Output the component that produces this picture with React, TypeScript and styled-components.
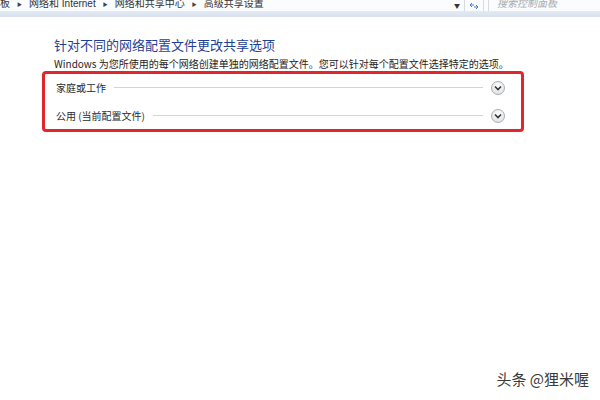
import React from 'react';
import styled, { createGlobalStyle } from 'styled-components';

const GlobalStyle = createGlobalStyle`
  html, body {
    margin: 0;
    padding: 0;
    background: #ffffff;
    font-family: "Noto Sans CJK SC", "Noto Sans", sans-serif;
  }
`;

const Page = styled.div`
  width: 600px;
  height: 400px;
  position: relative;
  overflow: hidden;
  background: #fff;
`;

const AddressBar = styled.div`
  height: 11px;
  display: flex;
  align-items: flex-end;
  background: #fbfcfd;
  overflow: hidden;
`;

const Crumbs = styled.div`
  flex: 1;
  display: flex;
  align-items: center;
  gap: 6px;
  font-family: "Liberation Sans", "Noto Sans CJK SC", sans-serif;
  font-size: 10px;
  line-height: 14px;
  color: #333;
`;

const Arrow = styled.span`
  font-size: 5px;
  color: #444;
  margin: 0 1px;
`;

const Tools = styled.div`
  display: flex;
  align-items: stretch;
  height: 11px;
`;

const ToolCell = styled.div<{ w: number }>`
  width: ${p => p.w}px;
  display: flex;
  align-items: center;
  justify-content: center;
  border-right: 1px solid #d6dbe2;
  font-size: 6px;
  color: #333;
`;

const Search = styled.div`
  width: 103px;
  margin-left: 4px;
  border-left: 1px solid #d6dbe2;
  padding-left: 8px;
  font-size: 10px;
  line-height: 14px;
  font-style: italic;
  color: #a7acb3;
  margin-top: -4px;
`;

const Band = styled.div`
  height: 6px;
  background: linear-gradient(#e3ebf4, #d6e0ec);
`;

const Content = styled.div`
  padding: 19px 0 0 42px;
`;

const Heading = styled.h1`
  margin: 0 0 0 12px;
  font-size: 13px;
  font-weight: normal;
  line-height: 17px;
  color: #1f3f93;
`;

const Description = styled.p`
  margin: 4px 0 0 12px;
  font-size: 10px;
  line-height: 14px;
  color: #1e1e1e;
`;

const Highlight = styled.div`
  box-sizing: border-box;
  width: 482px;
  height: 61px;
  border: 3px solid #e3262b;
  border-radius: 4px;
  display: flex;
  flex-direction: column;
  justify-content: center;
  gap: 13px;
  padding: 0 16px 0 11px;
`;

const Row = styled.div`
  display: flex;
  align-items: center;
  gap: 8px;
  height: 15px;
`;

const RowLabel = styled.span`
  font-size: 10px;
  color: #2b2b2b;
  white-space: nowrap;
`;

const Rule = styled.div`
  flex: 1;
  height: 1px;
  background: #d2d4d8;
`;

const Toggle = styled.div`
  width: 12px;
  height: 12px;
  border-radius: 50%;
  border: 1px solid #a9adb3;
  background: radial-gradient(circle at 50% 35%, #ffffff, #d8dadd);
  display: flex;
  align-items: center;
  justify-content: center;
`;

const Watermark = styled.div`
  position: absolute;
  right: 11px;
  bottom: 11px;
  font-size: 15px;
  color: #3a3a3a;
  text-shadow: 0 0 2px #fff, 0 0 2px #fff;
`;

const Chevron = () => (
  <svg width="8" height="6" viewBox="0 0 8 6">
    <path d="M1 1.5 L4 4.5 L7 1.5" fill="none" stroke="#333" strokeWidth="1.6" />
  </svg>
);

const sections = ['家庭或工作', '公用 (当前配置文件)'];

const App = () => {
  return (
    <Page>
      <GlobalStyle />
      <AddressBar>
        <Crumbs>
          <span>板</span>
          <Arrow>▶</Arrow>
          <span>网络和 Internet</span>
          <Arrow>▶</Arrow>
          <span>网络和共享中心</span>
          <Arrow>▶</Arrow>
          <span>高级共享设置</span>
        </Crumbs>
        <Tools>
          <ToolCell w={14}>▼</ToolCell>
          <ToolCell w={18}>
            <svg width="10" height="8" viewBox="0 0 10 8">
              <path d="M1 3 L5 3 M3 1 L1 3 L3 5" stroke="#4a7bc0" strokeWidth="1" fill="none" />
              <path d="M9 5 L5 5 M7 3 L9 5 L7 7" stroke="#4a7bc0" strokeWidth="1" fill="none" />
            </svg>
          </ToolCell>
          <Search>搜索控制面板</Search>
        </Tools>
      </AddressBar>
      <Band />
      <Content>
        <Heading>针对不同的网络配置文件更改共享选项</Heading>
        <Description>
          Windows 为您所使用的每个网络创建单独的网络配置文件。您可以针对每个配置文件选择特定的选项。
        </Description>
        <Highlight>
          {sections.map(s => (
            <Row key={s}>
              <RowLabel>{s}</RowLabel>
              <Rule />
              <Toggle>
                <Chevron />
              </Toggle>
            </Row>
          ))}
        </Highlight>
      </Content>
      <Watermark>头条 @狸米喔</Watermark>
    </Page>
  );
};

export default App;
